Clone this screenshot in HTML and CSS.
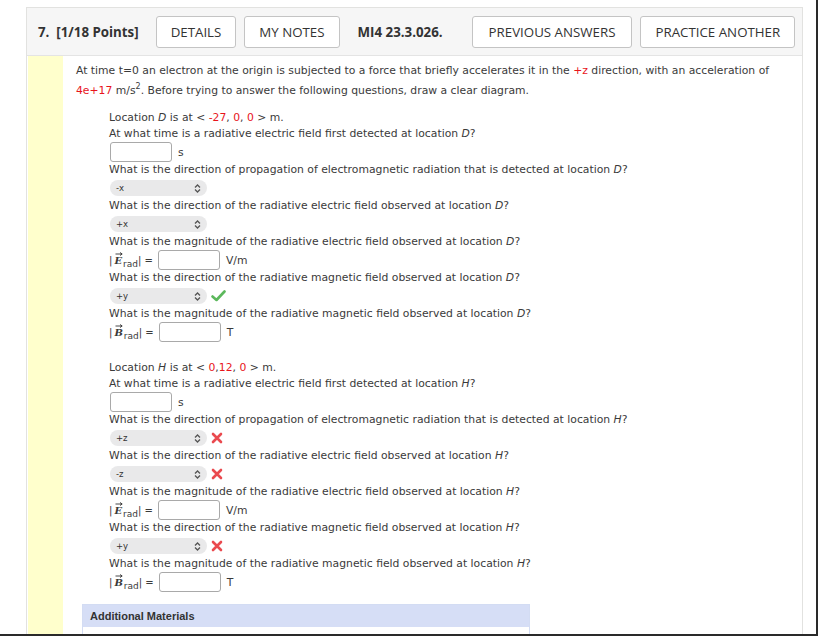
FILE: index.html
```html
<!DOCTYPE html>
<html>
<head>
<meta charset="utf-8">
<link rel="stylesheet" href="styles.css">
</head>
<body>
<div class="viewport">
  <div class="card">
    <div class="header">
      <span class="title">7.&nbsp; [1/18 Points]</span>
      <button class="btn btn-details">DETAILS</button>
      <button class="btn">MY NOTES</button>
      <span class="code">MI4 23.3.026.</span>
      <button class="btn btn-prev">PREVIOUS ANSWERS</button>
      <button class="btn">PRACTICE ANOTHER</button>
    </div>
    <div class="body">
      <div class="strip"></div>
      <div class="content">
        <p class="intro">At time t=0 an electron at the origin is subjected to a force that briefly accelerates it in the <span class="red">+z</span> direction, with an acceleration of <span class="red">4e+17</span> m/s<sup>2</sup>. Before trying to answer the following questions, draw a clear diagram.</p>

        <div class="part">
          <div class="q">Location <i>D</i> is at &lt; <span class="red">-27</span>, <span class="red">0</span>, <span class="red">0</span> &gt; m.</div>
          <div class="q">At what time is a radiative electric field first detected at location <i>D</i>?</div>
          <div class="row"><span class="input"></span><span class="unit">s</span></div>
          <div class="q">What is the direction of propagation of electromagnetic radiation that is detected at location <i>D</i>?</div>
          <div class="row"><span class="select">-x<span class="arrows"><svg width="7" height="9" viewBox="0 0 7 9"><path d="M1 3.5 L3.5 1 L6 3.5 M1 5.5 L3.5 8 L6 5.5" fill="none" stroke="#555" stroke-width="1.3"/></svg></span></span></div>
          <div class="q">What is the direction of the radiative electric field observed at location <i>D</i>?</div>
          <div class="row"><span class="select">+x<span class="arrows"><svg width="7" height="9" viewBox="0 0 7 9"><path d="M1 3.5 L3.5 1 L6 3.5 M1 5.5 L3.5 8 L6 5.5" fill="none" stroke="#555" stroke-width="1.3"/></svg></span></span></div>
          <div class="q">What is the magnitude of the radiative electric field observed at location <i>D</i>?</div>
          <div class="row"><span class="vec">|<span class="sym">E<svg class="arr" width="8" height="4" viewBox="0 0 8 4"><path d="M0.5 2 H7 M5 0.5 L7.2 2 L5 3.5" fill="none" stroke="#333" stroke-width="0.9"/></svg></span><sub>rad</sub>| =</span><span class="input"></span><span class="unit">V/m</span></div>
          <div class="q">What is the direction of the radiative magnetic field observed at location <i>D</i>?</div>
          <div class="row"><span class="select">+y<span class="arrows"><svg width="7" height="9" viewBox="0 0 7 9"><path d="M1 3.5 L3.5 1 L6 3.5 M1 5.5 L3.5 8 L6 5.5" fill="none" stroke="#555" stroke-width="1.3"/></svg></span></span><svg class="mark" width="15" height="12" viewBox="0 0 15 12"><path d="M1.5 6.5 L5.5 10 L13.5 1.5" fill="none" stroke="#5cb85c" stroke-width="2.6" stroke-linecap="round" stroke-linejoin="round"/></svg></div>
          <div class="q">What is the magnitude of the radiative magnetic field observed at location <i>D</i>?</div>
          <div class="row"><span class="vec">|<span class="sym">B<svg class="arr" width="8" height="4" viewBox="0 0 8 4"><path d="M0.5 2 H7 M5 0.5 L7.2 2 L5 3.5" fill="none" stroke="#333" stroke-width="0.9"/></svg></span><sub>rad</sub>| =</span><span class="input"></span><span class="unit">T</span></div>
        </div>

        <div class="part part-h">
          <div class="q">Location <i>H</i> is at &lt; <span class="red">0</span>,<span class="red">12</span>, <span class="red">0</span> &gt; m.</div>
          <div class="q">At what time is a radiative electric field first detected at location <i>H</i>?</div>
          <div class="row"><span class="input"></span><span class="unit">s</span></div>
          <div class="q">What is the direction of propagation of electromagnetic radiation that is detected at location <i>H</i>?</div>
          <div class="row"><span class="select">+z<span class="arrows"><svg width="7" height="9" viewBox="0 0 7 9"><path d="M1 3.5 L3.5 1 L6 3.5 M1 5.5 L3.5 8 L6 5.5" fill="none" stroke="#555" stroke-width="1.3"/></svg></span></span><svg class="mark" width="12" height="12" viewBox="0 0 12 12"><path d="M2 2 L10 10 M10 2 L2 10" stroke="#ea4a4f" stroke-width="2.6" stroke-linecap="round"/></svg></div>
          <div class="q">What is the direction of the radiative electric field observed at location <i>H</i>?</div>
          <div class="row"><span class="select">-z<span class="arrows"><svg width="7" height="9" viewBox="0 0 7 9"><path d="M1 3.5 L3.5 1 L6 3.5 M1 5.5 L3.5 8 L6 5.5" fill="none" stroke="#555" stroke-width="1.3"/></svg></span></span><svg class="mark" width="12" height="12" viewBox="0 0 12 12"><path d="M2 2 L10 10 M10 2 L2 10" stroke="#ea4a4f" stroke-width="2.6" stroke-linecap="round"/></svg></div>
          <div class="q">What is the magnitude of the radiative electric field observed at location <i>H</i>?</div>
          <div class="row"><span class="vec">|<span class="sym">E<svg class="arr" width="8" height="4" viewBox="0 0 8 4"><path d="M0.5 2 H7 M5 0.5 L7.2 2 L5 3.5" fill="none" stroke="#333" stroke-width="0.9"/></svg></span><sub>rad</sub>| =</span><span class="input"></span><span class="unit">V/m</span></div>
          <div class="q">What is the direction of the radiative magnetic field observed at location <i>H</i>?</div>
          <div class="row"><span class="select">+y<span class="arrows"><svg width="7" height="9" viewBox="0 0 7 9"><path d="M1 3.5 L3.5 1 L6 3.5 M1 5.5 L3.5 8 L6 5.5" fill="none" stroke="#555" stroke-width="1.3"/></svg></span></span><svg class="mark" width="12" height="12" viewBox="0 0 12 12"><path d="M2 2 L10 10 M10 2 L2 10" stroke="#ea4a4f" stroke-width="2.6" stroke-linecap="round"/></svg></div>
          <div class="q">What is the magnitude of the radiative magnetic field observed at location <i>H</i>?</div>
          <div class="row"><span class="vec">|<span class="sym">B<svg class="arr" width="8" height="4" viewBox="0 0 8 4"><path d="M0.5 2 H7 M5 0.5 L7.2 2 L5 3.5" fill="none" stroke="#333" stroke-width="0.9"/></svg></span><sub>rad</sub>| =</span><span class="input"></span><span class="unit">T</span></div>
        </div>

        <div class="materials">
          <div class="materials-head">Additional Materials</div>
          <div class="materials-body"></div>
        </div>
      </div>
    </div>
  </div>
</div>
</body>
</html>
```

FILE: styles.css
```css
html, body {
  margin: 0;
  padding: 0;
  background: #ffffff;
}
.viewport {
  width: 818px;
  height: 636px;
  box-sizing: border-box;
  border-right: 2px solid #2a2a2a;
  border-bottom: 2px solid #2a2a2a;
  overflow: hidden;
  padding: 7px 0 0 26px;
}
.card {
  width: 777px;
  box-sizing: border-box;
  border: 1px solid #e2e2e0;
  border-bottom: none;
  height: 640px;
}
.header {
  display: flex;
  align-items: center;
  height: 47px;
  background: #f6f6f6;
  border-bottom: 1px solid #e4e4e4;
  padding: 0 0 0 11px;
  font-family: "Open Sans", sans-serif;
  color: #333;
  white-space: nowrap;
  overflow: hidden;
}
.header > * {
  flex-shrink: 0;
  white-space: nowrap;
}
.title {
  font-weight: 700;
  font-size: 13.3px;
  margin-right: 17px;
}
.code {
  font-weight: 700;
  font-size: 13.3px;
  margin: 0 29px 0 10px;
}
.btn {
  font-family: "Open Sans", sans-serif;
  font-size: 13.3px;
  color: #333;
  background: #ffffff;
  border: 1px solid #c4c4c4;
  border-radius: 3px;
  height: 32px;
  padding: 0 14px;
  margin-right: 8px;
}
.btn-prev {
  padding: 0 16px;
}
.body {
  display: flex;
  height: 600px;
}
.strip {
  width: 35px;
  margin-left: 1px;
  background: #ffffcc;
  flex-shrink: 0;
}
.content {
  padding: 0 0 0 13px;
  font-family: "DejaVu Sans", Verdana, sans-serif;
  font-size: 10.8px;
  color: #3a3a3a;
}
.intro {
  margin: 5px 0 9px 0;
  line-height: 20px;
  width: 705px;
}
.intro sup {
  font-size: 8px;
  line-height: 0;
}
.red {
  color: #e8141b;
}
.part {
  margin-left: 33px;
}
.part-h {
  margin-top: 18px;
}
.q {
  height: 16px;
  line-height: 16px;
  white-space: nowrap;
}
.row {
  height: 20px;
  display: flex;
  align-items: center;
}
.input {
  display: inline-block;
  width: 60px;
  height: 18px;
  border: 1px solid #a9a9a9;
  border-radius: 3px;
  background: #fff;
  margin-left: 1px;
}
.unit {
  margin-left: 6px;
}
.select {
  display: inline-flex;
  align-items: center;
  justify-content: space-between;
  box-sizing: border-box;
  width: 97px;
  height: 16px;
  border-radius: 8px;
  background: #e9e9ea;
  padding: 0 6px 0 6px;
  margin-left: 1px;
  font-size: 8.5px;
  color: #333;
}
.arrows {
  display: flex;
  align-items: center;
}
.mark {
  margin-left: 4px;
}
.vec {
  font-size: 10px;
  margin-right: 4px;
  white-space: nowrap;
}
.sym {
  font-family: "DejaVu Serif", serif;
  font-style: italic;
  font-weight: 700;
  font-size: 10px;
  position: relative;
  margin: 0 1px 0 2px;
}
.arr {
  position: absolute;
  left: 1px;
  top: -3px;
}
.vec sub {
  font-size: 9px;
  line-height: 0;
}
.materials {
  margin: 12px 0 0 6px;
  width: 446px;
  border: 1px solid #d3dcf3;
}
.materials-head {
  background: #d6def6;
  height: 22px;
  line-height: 22px;
  padding-left: 7px;
  font-family: "Liberation Sans", Arial, sans-serif;
  font-weight: 700;
  font-size: 11px;
  color: #333;
}
.materials-body {
  height: 40px;
  background: #fff;
}
```
